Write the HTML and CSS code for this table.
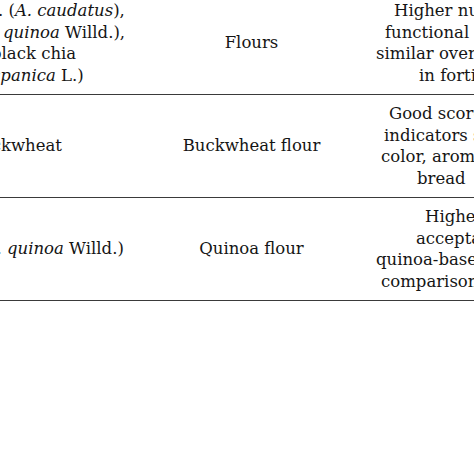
FILE: index.html
```html
<!DOCTYPE html>
<html lang="en">
<head>
<meta charset="utf-8">
<title>Table</title>
<link rel="stylesheet" href="styles.css">
</head>
<body>
<div class="page">
  <div class="table">
    <div class="row">
      <div class="cell c1">
        <div class="ln i1">L. (<em>A. caudatus</em>),</div>
        <div class="ln i2">(C. <em>quinoa</em> Willd.),</div>
        <div class="ln i3">black chia</div>
        <div class="ln i4"><em>hispanica</em> L.)</div>
      </div>
      <div class="cell c2">Flours</div>
      <div class="cell c3">
        <div class="ln o1a">Higher nutritional and</div>
        <div class="ln o1b">functional properties,</div>
        <div class="ln o1c">similar overall acceptability</div>
        <div class="ln o1d">in fortified breads</div>
      </div>
    </div>
    <div class="row">
      <div class="cell c1">
        <div class="ln i5">Buckwheat</div>
      </div>
      <div class="cell c2">Buckwheat flour</div>
      <div class="cell c3">
        <div class="ln o2a">Good scores for sensory</div>
        <div class="ln o2b">indicators such as</div>
        <div class="ln o2c">color, aroma, and taste of</div>
        <div class="ln o2d">bread</div>
      </div>
    </div>
    <div class="row">
      <div class="cell c1">
        <div class="ln i6">(C. <em>quinoa</em> Willd.)</div>
      </div>
      <div class="cell c2">Quinoa flour</div>
      <div class="cell c3">
        <div class="ln o3a">Higher overall</div>
        <div class="ln o3b">acceptability of</div>
        <div class="ln o3c">quinoa-based breads in</div>
        <div class="ln o3d">comparison with control</div>
      </div>
    </div>
  </div>
</div>
</body>
</html>
```
FILE: styles.css
```css
html, body {
  margin: 0;
  padding: 0;
  background: #ffffff;
}

.page {
  width: 474px;
  height: 474px;
  overflow: hidden;
  background: #ffffff;
  font-family: "DejaVu Serif", "Liberation Serif", serif;
  font-size: 16.5px;
  line-height: 21.5px;
  color: #151515;
}

.table {
  margin-top: -8px;
  width: 640px;
  display: flex;
  flex-direction: column;
}

.row {
  display: grid;
  grid-template-columns: 160px 183px 297px;
  align-items: center;
  padding: 8px 0;
  border-bottom: 1px solid #3a3a3a;
}

.cell {
  display: flex;
  flex-direction: column;
}

.c2 {
  text-align: center;
}

.ln {
  white-space: nowrap;
}

em {
  font-style: italic;
}

/* first column: lines run in from the left edge of the crop */
.i1 { margin-left: -13px; }
.i2 { margin-left: -26px; }
.i3 { margin-left: -9px; }
.i4 { margin-left: -24px; }
.i5 { margin-left: -31px; }
.i6 { margin-left: -22px; }

/* third column: centred lines, cut by the right edge of the crop */
.o1a { margin-left: 51px; }
.o1b { margin-left: 42px; }
.o1c { margin-left: 33px; }
.o1d { margin-left: 76px; }

.o2a { margin-left: 46px; }
.o2b { margin-left: 41px; }
.o2c { margin-left: 38px; }
.o2d { margin-left: 74px; }

.o3a { margin-left: 82px; }
.o3b { margin-left: 73px; }
.o3c { margin-left: 33px; }
.o3d { margin-left: 38px; }
```
